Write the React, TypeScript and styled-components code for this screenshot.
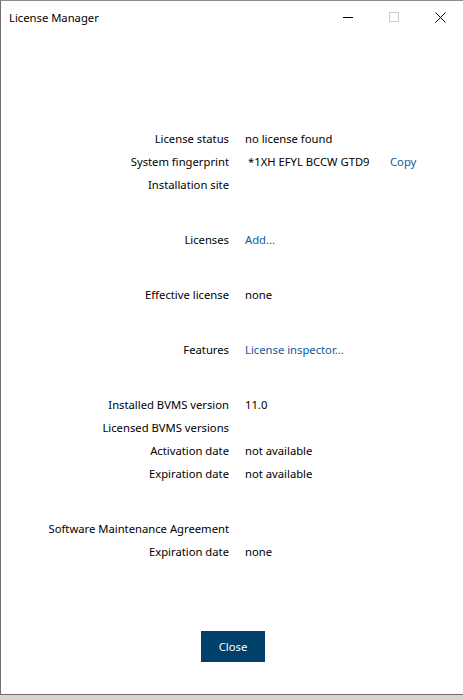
import styled, { createGlobalStyle } from 'styled-components'

const GlobalStyle = createGlobalStyle`
  html, body {
    margin: 0;
    padding: 0;
    background: #d6d6d6;
  }
  body {
    font-family: 'Segoe UI', 'Noto Sans', sans-serif;
    font-size: 11.25px;
    color: #000;
  }
`

type Row = { label: string; value?: string; link?: string }

const sections: Row[][] = [
  [
    { label: 'License status', value: 'no license found' },
    { label: 'System fingerprint' },
    { label: 'Installation site' }
  ],
  [{ label: 'Licenses', link: 'Add...' }],
  [{ label: 'Effective license', value: 'none' }],
  [{ label: 'Features', link: 'License inspector...' }],
  [
    { label: 'Installed BVMS version', value: '11.0' },
    { label: 'Licensed BVMS versions' },
    { label: 'Activation date', value: 'not available' },
    { label: 'Expiration date', value: 'not available' }
  ],
  [
    { label: 'Software Maintenance Agreement' },
    { label: 'Expiration date', value: 'none' }
  ]
]

const App = () => {
  return (
    <>
      <GlobalStyle />
      <Window>
        <TitleBar>
          <Title>License Manager</Title>
          <Controls>
            <ControlButton>
              <svg width="10" height="10" viewBox="0 0 10 10">
                <path d="M0 5.5h10" stroke="#000" strokeWidth="1" />
              </svg>
            </ControlButton>
            <ControlButton>
              <svg width="10" height="10" viewBox="0 0 10 10">
                <rect x="0.5" y="0.5" width="9" height="9" fill="none" stroke="#cccccc" />
              </svg>
            </ControlButton>
            <ControlButton>
              <svg width="11" height="11" viewBox="0 0 11 11">
                <path d="M0.5 0.5l10 10M10.5 0.5l-10 10" stroke="#000" strokeWidth="1" />
              </svg>
            </ControlButton>
          </Controls>
        </TitleBar>
        <Content>
          {sections.map((rows, i) => (
            <Section key={`section_${i}`}>
              {rows.map((r) => (
                <InfoRow key={r.label}>
                  <Label>{r.label}</Label>
                  {r.label === 'System fingerprint' ? (
                    <Value>
                      <Fingerprint>*1XH EFYL BCCW GTD9</Fingerprint>
                      <Link>Copy</Link>
                    </Value>
                  ) : (
                    <Value>{r.link ? <Link>{r.link}</Link> : r.value}</Value>
                  )}
                </InfoRow>
              ))}
            </Section>
          ))}
          <Footer>
            <CloseButton>Close</CloseButton>
          </Footer>
        </Content>
      </Window>
    </>
  )
}

export default App

const Window = styled.div`
  box-sizing: border-box;
  height: 695px;
  background: #fff;
  border-top: 1px solid #8c8c8c;
  border-left: 1px solid #707070;
  border-bottom: 1px solid #6b6b6b;
  display: flex;
  flex-direction: column;
`
const TitleBar = styled.div`
  height: 32px;
  display: flex;
  align-items: center;
  justify-content: space-between;
`
const Title = styled.div`
  padding-left: 8px;
  color: #000;
`
const Controls = styled.div`
  display: flex;
  height: 100%;
`
const ControlButton = styled.div`
  width: 46px;
  display: flex;
  align-items: center;
  justify-content: center;
`
const Content = styled.div`
  padding-top: 94px;
  display: flex;
  flex-direction: column;
  gap: 32px;
`
const Section = styled.div`
  display: flex;
  flex-direction: column;
`
const InfoRow = styled.div`
  display: grid;
  grid-template-columns: 228px 1fr;
  column-gap: 16px;
  height: 23px;
  align-items: center;
  white-space: nowrap;
`
const Label = styled.div`
  text-align: right;
`
const Value = styled.div`
  display: flex;
  align-items: center;
`
const Fingerprint = styled.span`
  width: 142px;
  padding-left: 3px;
`
const Link = styled.span`
  color: #0e5a9c;
  cursor: pointer;
`
const Footer = styled.div`
  display: flex;
  justify-content: center;
  padding-left: 2px;
  margin-top: 36px;
`
const CloseButton = styled.button`
  width: 64px;
  height: 31px;
  border: none;
  background: #00406b;
  color: #fff;
  font-family: 'Segoe UI', 'Noto Sans', sans-serif;
  font-size: 11.25px;
  cursor: pointer;
`
